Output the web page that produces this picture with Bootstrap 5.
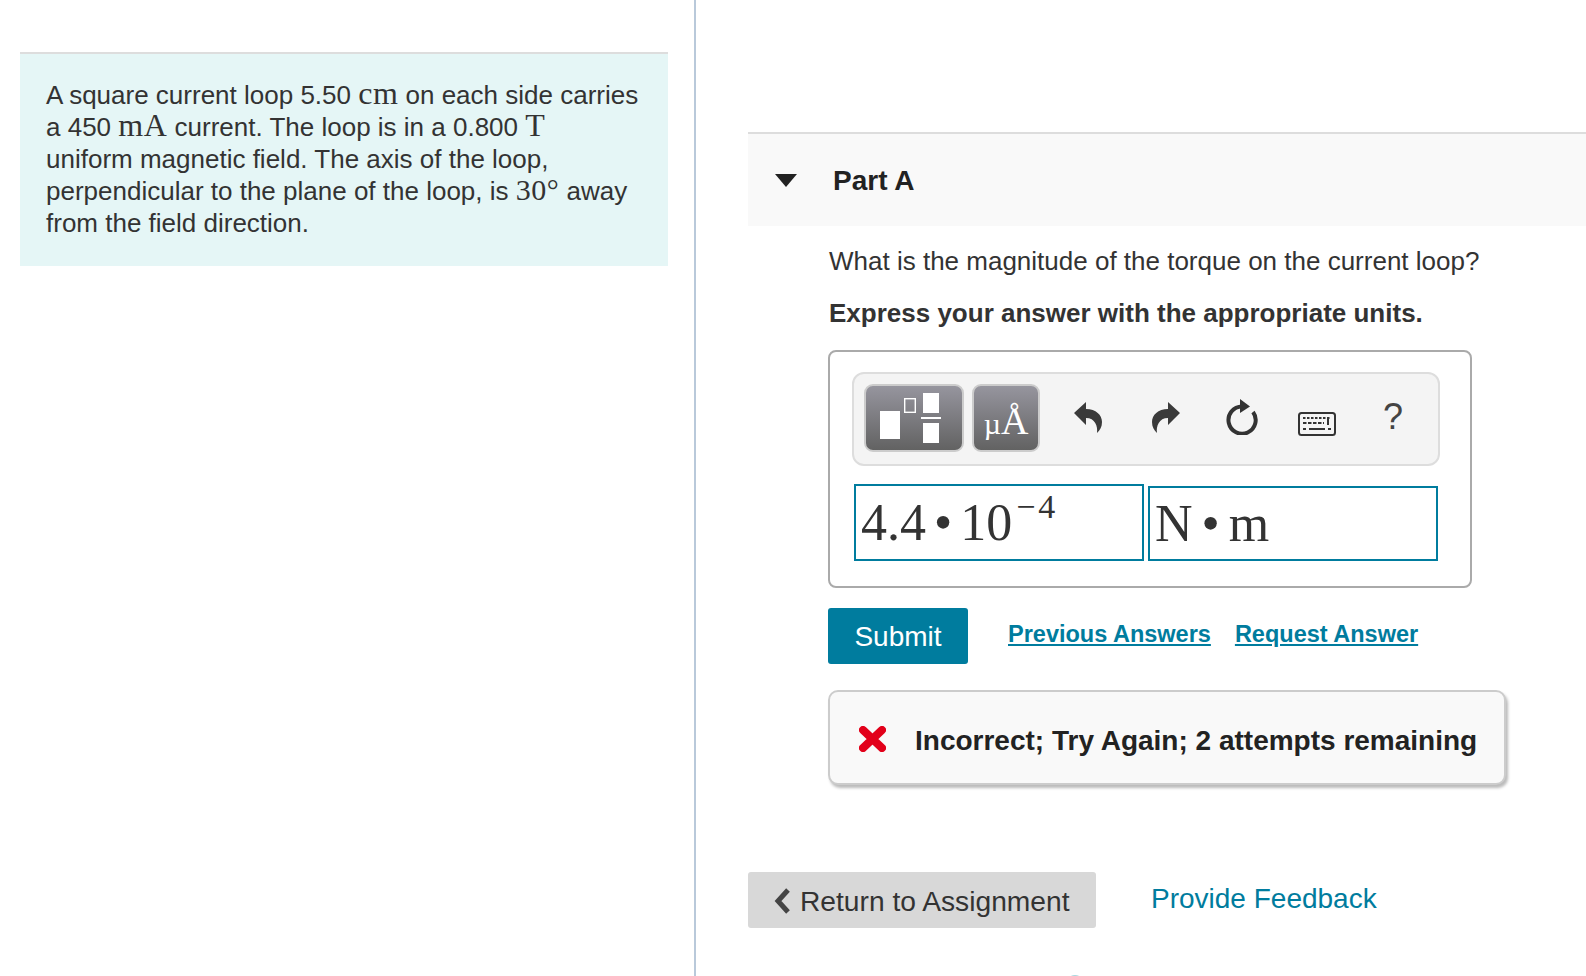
<!DOCTYPE html>
<html lang="en">
<head>
  <meta charset="UTF-8" />
  <title>Part A</title>
  <link rel="stylesheet" href="https://cdn.jsdelivr.net/npm/bootstrap@5.3.2/dist/css/bootstrap.min.css">
  <style>
    html, body { height: 976px; overflow: hidden; }
    body { font-family: "Liberation Sans", Arial, sans-serif; font-size: 26px; line-height: 32px; color: #333; background: #fff; }
    .left-col { width: 696px; height: 976px; flex: none; padding: 52px 26px 0 20px; border-right: 2px solid #b9c9da; }
    .intro-box { background: #e5f6f6; border-top: 2px solid #ddd; padding: 25px 20px 25px 26px; height: 214px; }
    .tex { display: inline-block; line-height: 26px; font-family: "Liberation Serif", serif; font-size: 32px; letter-spacing: .5px; }
    .tex-deg { font-size: 30px; }
    .right-col { flex: 1; padding: 132px 0 0 52px; min-width: 0; }
    .part-head { height: 94px; background: #f9f9f9; border-top: 2px solid #ddd; padding-left: 27px; }
    .part-head b { color: #222; margin-left: 36px; padding-top: 2px; font-size: 28px; }
    .part-body { padding: 19px 0 0 80px; }
    .part-body p { margin: 0 0 20px 1px; }
    .part-body p + p { margin-bottom: 21px; }
    .answer-box { width: 644px; height: 238px; border: 2px solid #aaa; border-radius: 8px; padding: 20px 14px 0 22px; }
    .tool-strip { width: 588px; height: 94px; background: #f4f4f4; border: 2px solid #ddd; border-radius: 12px; padding: 10px 0 0 10px; }
    .tool-btn { height: 68px; border: 2px solid #ccc; border-radius: 9px; background: linear-gradient(#96959e, #626262); color: #fff; }
    .tool-tpl { width: 100px; padding-left: 14px; }
    .tool-unit { width: 68px; margin-left: 8px; font-family: "Liberation Serif", serif; font-size: 38px; line-height: 1; padding-top: 16px; }
    .tool-unit span { font-size: 30px; }
    .tool-icons { padding-bottom: 14px; }
    .tool-icons svg { margin-left: 46px; }
    .tool-icons svg.undo-ico { margin-left: 34px; }
    .tool-icons svg.redo-ico { margin-left: 50px; }
    .tool-icons svg.kbd-ico { margin-left: 40px; margin-top: 14px; }
    .tool-help { font-size: 36px; color: #444; margin-left: 47px; }
    .math-row { margin: 18px 0 0 2px; gap: 4px; }
    .math-input { width: 290px; height: 77px; border: 2px solid #007c9e; padding-left: 5px; font-family: "Liberation Serif", serif; font-size: 52px; line-height: 73px; white-space: nowrap; word-spacing: -5px; }
    .math-input.unit-side { height: 75px; line-height: 71px; word-spacing: -4px; }
    .math-input sup { font-size: 34px; top: -22px; vertical-align: baseline; position: relative; margin-left: 4px; line-height: 0; }
    .submit-btn { width: 140px; height: 56px; background: #007c9e; color: #fff; font-size: 28px; line-height: 58px; padding: 0; border: 0; border-radius: 3px; }
    .submit-btn:hover { background: #007c9e; color: #fff; }
    .answer-actions { margin-top: 20px; }
    .answer-actions a { color: #007c9e; font-size: 23.5px; font-weight: 700; margin: 10px 0 0 24px; }
    .answer-actions a:first-of-type { margin-left: 40px; }
    .result-box { width: 678px; height: 95px; margin-top: 26px; background: #f9f9f9; border: 2px solid #ccc; border-radius: 10px; box-shadow: 2px 3px 3px #bbb; padding: 3px 0 0 29px; color: #222; font-size: 28px; }
    .result-box svg { margin-right: 29px; }
    .bottom-row { margin-top: 87px; }
    .return-btn { width: 348px; height: 56px; background: #d8d8d8; border-radius: 3px; color: #333; padding: 2px 0 0 25px; font-size: 28.2px; text-decoration: none; }
    .return-btn svg { margin-right: 9px; }
    .feedback-link { color: #007c9e; text-decoration: none; font-size: 28px; margin-left: 55px; position: relative; top: -1px; }
    .peek-dot { width: 18px; height: 18px; border-radius: 50%; background: #a9d8e0; margin: 47px 0 0 318px; }
  </style>
</head>
<body class="d-flex">
  <div class="left-col">
    <div class="intro-box">A square current loop 5.50 <span class="tex">cm</span> on each side carries<br>a 450 <span class="tex">mA</span> current. The loop is in a 0.800 <span class="tex">T</span><br>uniform magnetic field. The axis of the loop,<br>perpendicular to the plane of the loop, is <span class="tex tex-deg">30°</span> away<br>from the field direction.</div>
  </div>
  <div class="right-col">
    <div class="part-head d-flex align-items-center">
      <svg width="22" height="13" viewBox="0 0 22 13"><path d="M0 0H22L11 13Z" fill="#222"/></svg>
      <b>Part A</b>
    </div>
    <div class="part-body">
      <p>What is the magnitude of the torque on the current loop?</p>
      <p><b>Express your answer with the appropriate units.</b></p>
      <div class="answer-box">
        <div class="tool-strip d-flex">
          <div class="tool-btn tool-tpl d-flex align-items-center">
            <svg width="61" height="50" viewBox="0 0 61 50">
              <rect x="0" y="18" width="20" height="28" fill="#fff"/>
              <rect x="24.7" y="5.7" width="10.6" height="13.6" fill="none" stroke="#fff" stroke-width="1.4"/>
              <rect x="43" y="0" width="16" height="20" fill="#fff"/>
              <rect x="41" y="24" width="20" height="2" fill="#fff"/>
              <rect x="43" y="30" width="16" height="20" fill="#fff"/>
            </svg>
          </div>
          <div class="tool-btn tool-unit text-center"><span>µ</span>Å</div>
          <div class="d-flex align-items-center flex-grow-1 tool-icons">
            <svg class="undo-ico" width="28" height="31" viewBox="0 0 28 31"><path d="M0 11L12 0V7C22 7 28 13 28 20C28 25 26 28 23 31C24 24 21 16 12 16V23Z" fill="#3a3a3a"/></svg>
            <svg class="redo-ico" width="28" height="31" viewBox="0 0 28 31"><path d="M28 11L16 0V7C6 7 0 13 0 20C0 25 2 28 5 31C4 24 7 16 16 16V23Z" fill="#3a3a3a"/></svg>
            <svg width="32" height="36" viewBox="0 0 32 36"><path d="M16 7.5A13.6 13.6 0 1 0 27 13" fill="none" stroke="#333" stroke-width="4"/><path d="M14 0L24 7.5L14 14Z" fill="#333"/></svg>
            <svg class="kbd-ico" width="38" height="24" viewBox="0 0 38 24">
              <rect x="1" y="1" width="36" height="22" rx="2.5" fill="#f4f4f4" stroke="#333" stroke-width="2"/>
              <path d="M5 6H33" stroke="#333" stroke-width="2" stroke-dasharray="2.5 1.5"/>
              <path d="M5 11H26" stroke="#333" stroke-width="2" stroke-dasharray="3.5 1.5"/>
              <path d="M5 17H8M11 17H27M30 17H33M30 6V13" stroke="#333" stroke-width="2"/>
            </svg>
            <span class="tool-help">?</span>
          </div>
        </div>
        <div class="math-row d-flex align-items-end">
          <div class="math-input">4.4 • 10<sup>−&#8202;4</sup></div>
          <div class="math-input unit-side">N • m</div>
        </div>
      </div>
      <div class="answer-actions d-flex align-items-start">
        <button class="btn submit-btn" type="button">Submit</button>
        <a href="#">Previous Answers</a>
        <a href="#">Request Answer</a>
      </div>
      <div class="result-box d-flex align-items-center fw-bold">
        <svg width="27" height="26" viewBox="0 0 27 26"><path d="M4 4L23 22M23 4L4 22" stroke="#e2001a" stroke-width="8" stroke-linecap="round"/></svg>
        <span class="pt-1">Incorrect; Try Again; 2 attempts remaining</span>
      </div>
    </div>
    <div class="bottom-row d-flex align-items-center">
      <a href="#" class="return-btn d-flex align-items-center">
        <svg width="18" height="26" viewBox="0 0 18 26"><path d="M15 2L5 13L15 24" fill="none" stroke="#444" stroke-width="5"/></svg>
        Return to Assignment
      </a>
      <a href="#" class="feedback-link">Provide Feedback</a>
    </div>
    <div class="peek-dot"></div>
  </div>
</body>
</html>
